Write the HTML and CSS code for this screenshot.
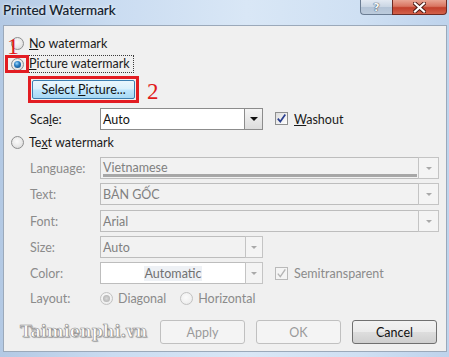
FILE: index.html
```html
<!DOCTYPE html>
<html>
<head>
<meta charset="utf-8">
<link rel="stylesheet" href="styles.css">
</head>
<body>
<div class="window">
  <div class="titlebar">
    <div class="title">Printed Watermark</div>
    <div class="controls">
      <div class="help"><span>?</span></div>
      <div class="close">
        <svg width="13" height="11" viewBox="0 0 13 11">
          <path d="M2 1.5 L11 9.5 M11 1.5 L2 9.5" stroke="#4a1a14" stroke-width="4" stroke-linecap="square" fill="none"/>
          <path d="M2 1.5 L11 9.5 M11 1.5 L2 9.5" stroke="#ffffff" stroke-width="2.2" stroke-linecap="square" fill="none"/>
        </svg>
      </div>
    </div>
  </div>
  <div class="client">
    <div class="row r-no">
      <span class="radio"></span>
      <span class="text"><u>N</u>o watermark</span>
      <span class="num num1">1</span>
    </div>
    <div class="row r-pic">
      <span class="radio on"></span>
      <span class="text focus"><u>P</u>icture watermark</span>
      <span class="mark1"></span>
    </div>
    <div class="row r-sel">
      <div class="mark2">
        <div class="selbtn"><span>Select <u>P</u>icture...</span></div>
      </div>
      <span class="num num2">2</span>
    </div>
    <div class="row r-field r-scale">
      <span class="label">Sca<u>l</u>e:</span>
      <div class="combo small">
        <span class="val">Auto</span>
        <span class="drop"><i class="tri"></i></span>
      </div>
      <span class="check on">
        <svg width="11" height="11" viewBox="0 0 11 11"><path d="M1.8 5.6 L4.3 8.6 L9.3 1.4" stroke="#2a3f8f" stroke-width="1.7" fill="none"/></svg>
      </span>
      <span class="text"><u>W</u>ashout</span>
    </div>
    <div class="row r-text">
      <span class="radio"></span>
      <span class="text">Te<u>x</u>t watermark</span>
    </div>
    <div class="row r-field r-lang dis">
      <span class="label">Language:</span>
      <div class="combo wide">
        <span class="val ul">Vietnamese</span>
        <span class="drop"><i class="tri"></i></span>
      </div>
    </div>
    <div class="row r-field r-gap dis">
      <span class="label">Text:</span>
      <div class="combo wide">
        <span class="val">BẢN GỐC</span>
        <span class="drop"><i class="tri"></i></span>
      </div>
    </div>
    <div class="row r-field r-gap5 dis">
      <span class="label">Font:</span>
      <div class="combo wide">
        <span class="val">Arial</span>
        <span class="drop"><i class="tri"></i></span>
      </div>
    </div>
    <div class="row r-field r-gap dis">
      <span class="label">Size:</span>
      <div class="combo small">
        <span class="val">Auto</span>
        <span class="drop"><i class="tri"></i></span>
      </div>
    </div>
    <div class="row r-field r-gap dis">
      <span class="label">Color:</span>
      <div class="combo small white">
        <span class="val center"><span class="hl">Automatic</span></span>
        <span class="drop"><i class="tri"></i></span>
      </div>
      <span class="check on">
        <svg width="11" height="11" viewBox="0 0 11 11"><path d="M1.8 5.6 L4.3 8.6 L9.3 1.4" stroke="#b4b4b4" stroke-width="1.4" fill="none"/></svg>
      </span>
      <span class="text">Semitransparent</span>
    </div>
    <div class="row r-field r-layout dis">
      <span class="label">Layout:</span>
      <span class="radio on"></span>
      <span class="text">Diagonal</span>
      <span class="radio r-h"></span>
      <span class="text">Horizontal</span>
    </div>
    <div class="row r-btns">
      <span class="brand">Taimienphi.vn</span>
      <div class="btn dis">Apply</div>
      <div class="btn dis">OK</div>
      <div class="btn">Cancel</div>
    </div>
  </div>
</div>
</body>
</html>
```
FILE: styles.css
```css
html, body {
  margin: 0;
  padding: 0;
}
body {
  font-family: "Lato", "Open Sans", sans-serif;
  font-size: 12.5px;
  color: #1a1a1a;
}
.window {
  width: 449px;
  height: 357px;
  box-sizing: border-box;
  padding: 0 2px 5px 3px;
  display: flex;
  flex-direction: column;
  background: linear-gradient(90deg, #b3c9e4 0%, #cadcf1 25%, #d9e7f6 55%, #cfe0f3 80%, #bed3ec 100%);
}
.titlebar {
  height: 25px;
  flex: none;
  display: flex;
  justify-content: space-between;
  align-items: flex-start;
}
.title {
  font-size: 13.5px;
  color: #0f1a2b;
  padding-top: 2px;
  -webkit-text-stroke: 0.2px #0f1a2b;
  text-shadow: 0 0 4px #eef5fc, 0 0 2px #eef5fc;
}
.controls {
  display: flex;
  height: 15px;
}
.help {
  width: 32px;
  height: 15px;
  box-sizing: border-box;
  border: 1px solid #6b7d93;
  border-top: none;
  border-right: none;
  border-radius: 0 0 0 4px;
  background: linear-gradient(#e2e9f2 0%, #c9d5e3 50%, #b3c3d6 51%, #bccbdc 100%);
  display: flex;
  justify-content: center;
  align-items: center;
}
.help span {
  font-family: "DejaVu Sans", sans-serif;
  font-weight: bold;
  font-size: 11px;
  line-height: 11px;
  color: #f5f8fb;
  text-shadow: 0 0 1px #2c3a4f, 0 0 1px #2c3a4f;
}
.close {
  width: 55px;
  height: 15px;
  box-sizing: border-box;
  border: 1px solid #6e2a22;
  border-top: none;
  border-radius: 0 0 4px 0;
  background: linear-gradient(#e9a594 0%, #d97561 45%, #c2402c 55%, #d3614a 100%);
  display: flex;
  justify-content: center;
  align-items: center;
}
.client {
  flex: 1;
  background: #f0f0f0;
  border: 1px solid #9ba9ba;
  padding-top: 8px;
  display: flex;
  flex-direction: column;
}
.row {
  display: flex;
  align-items: center;
  position: relative;
}
.radio {
  width: 13px;
  height: 13px;
  box-sizing: border-box;
  border-radius: 50%;
  border: 1px solid #8d8e8f;
  background: radial-gradient(circle at 45% 40%, #fbfbfb 0%, #eaeaea 50%, #cfcfcf 100%);
  flex: none;
  position: relative;
}
.radio.on::after {
  content: "";
  position: absolute;
  left: 2px;
  top: 2px;
  width: 7px;
  height: 7px;
  border-radius: 50%;
  background: radial-gradient(circle at 40% 35%, #9fd8fb 0%, #2b7fc4 40%, #0d3f73 100%);
}
.r-no, .r-pic, .r-text {
  height: 18px;
  padding-left: 7px;
}
.r-no .text, .r-pic .text, .r-text .text {
  margin-left: 5px;
}
.r-pic {
  margin-top: 3px;
}
.text.focus {
  outline: 1px dotted #3a3a3a;
  outline-offset: 0;
  padding: 0 3px 0 0;
  line-height: 16px;
  margin-left: 5px;
}
.num {
  position: absolute;
  font-family: "Liberation Serif", serif;
  color: #e01b1b;
  line-height: 1;
}
.num1 {
  left: 3px;
  top: 0px;
  font-size: 24px;
}
.num2 {
  left: 143px;
  top: 4px;
  font-size: 23px;
}
.mark1 {
  position: absolute;
  left: 1px;
  top: 0;
  width: 24px;
  height: 18px;
  box-sizing: border-box;
  border: 3px solid #e21c22;
}
.r-sel {
  margin-top: 3px;
  height: 27px;
  padding-left: 24px;
}
.mark2 {
  width: 111px;
  height: 27px;
  box-sizing: border-box;
  border: 3px solid #e21c22;
  padding: 1px;
  display: flex;
}
.selbtn {
  flex: 1;
  box-sizing: border-box;
  border: 1px solid #3c7fb1;
  border-radius: 2px;
  background: linear-gradient(#eaf6fd 0%, #d9f0fc 48%, #bee6fd 52%, #a7d9f5 100%);
  display: flex;
  align-items: center;
  justify-content: center;
  color: #111;
}
.r-field {
  height: 22px;
  padding-left: 26px;
}
.r-scale {
  margin-top: 5px;
}
.r-text {
  margin-top: 4px;
  height: 17px;
}
.r-lang {
  margin-top: 6px;
}
.r-gap {
  margin-top: 4px;
}
.r-gap5 {
  margin-top: 5px;
}
.label {
  width: 70px;
  flex: none;
}
.dis .label, .dis .text {
  color: #8b8b8b;
}
.combo {
  height: 22px;
  box-sizing: border-box;
  border: 1px solid #8c8c8c;
  background: #fff;
  display: flex;
  align-items: stretch;
  flex: none;
}
.combo.small {
  width: 163px;
}
.combo.wide {
  width: 339px;
}
.combo .val {
  flex: 1;
  display: flex;
  align-items: center;
  padding-left: 2px;
  color: #111;
}
.combo .drop {
  width: 18px;
  box-sizing: border-box;
  border-left: 1px solid #8c8c8c;
  background: linear-gradient(#f4f4f4, #dcdcdc);
  display: flex;
  align-items: center;
  justify-content: center;
}
.tri {
  width: 0;
  height: 0;
  border-left: 4px solid transparent;
  border-right: 4px solid transparent;
  border-top: 4px solid #111;
}
.dis .combo {
  border-color: #bdbdbd;
  background: #f2f2f2;
}
.dis .combo.white {
  background: #fff;
}
.dis .combo.wide .drop {
  width: 21px;
}
.dis .combo .drop {
  border: 1px solid #c4c4c4;
  margin: -1px -1px -1px 0;
  background: #f4f4f4;
}
.dis .combo .val {
  color: #808080;
}
.dis .tri {
  border-top-color: #a9a9a9;
  border-left-width: 3.5px;
  border-right-width: 3.5px;
  border-top-width: 3.5px;
}
.combo .val.ul {
  border-bottom: 3px solid #a7a7a7;
  margin: 0 1px 1px 2px;
  padding-left: 0;
  padding-top: 2px;
}
.combo .val.center {
  justify-content: center;
  padding-left: 0;
}
.hl {
  background: #eef1f5;
  padding: 0 1px;
  color: #707070;
}
.check {
  width: 13px;
  height: 13px;
  box-sizing: border-box;
  border: 1px solid #8e8f8f;
  background: linear-gradient(135deg, #dcdcdc, #ffffff);
  margin-left: 12px;
  margin-right: 6px;
  display: flex;
  align-items: center;
  justify-content: center;
  flex: none;
}
.dis .check {
  border-color: #b9b9b9;
  background: #f4f4f4;
}
.r-scale .check {
  margin-top: -2px;
}
.r-layout {
  margin-top: 6px;
  height: 16px;
}
.dis .radio {
  border-color: #c2c2c2;
  background: radial-gradient(circle at 45% 40%, #fbfbfb 0%, #f0f0f0 60%, #e2e2e2 100%);
}
.dis .radio.on::after {
  background: radial-gradient(circle, #d8d8d8 0%, #a9a9a9 100%);
}
.r-layout .radio + .text {
  margin-left: 5px;
}
.r-layout .r-h {
  margin-left: 14px;
}
.r-btns {
  margin-top: 14px;
  height: 24px;
  padding-left: 16px;
  padding-right: 9px;
  gap: 11px;
}
.brand {
  flex: 1;
  min-width: 0;
  white-space: nowrap;
  font-family: "DejaVu Serif", serif;
  font-weight: bold;
  font-size: 16px;
  letter-spacing: 0;
  color: #ffffff;
  -webkit-text-stroke: 0.6px #8a8a8a;
  text-shadow: 1px 1px 1px #b0b0b0;
  line-height: 24px;
}
.btn {
  width: 85px;
  height: 24px;
  box-sizing: border-box;
  border: 1px solid #707070;
  border-radius: 3px;
  background: linear-gradient(#f2f2f2 0%, #ebebeb 48%, #dddddd 52%, #cfcfcf 100%);
  display: flex;
  align-items: center;
  justify-content: center;
  color: #111;
  flex: none;
}
.btn.dis {
  border-color: #c0c0c0;
  background: #f4f4f4;
  color: #9a9a9a;
}
```
